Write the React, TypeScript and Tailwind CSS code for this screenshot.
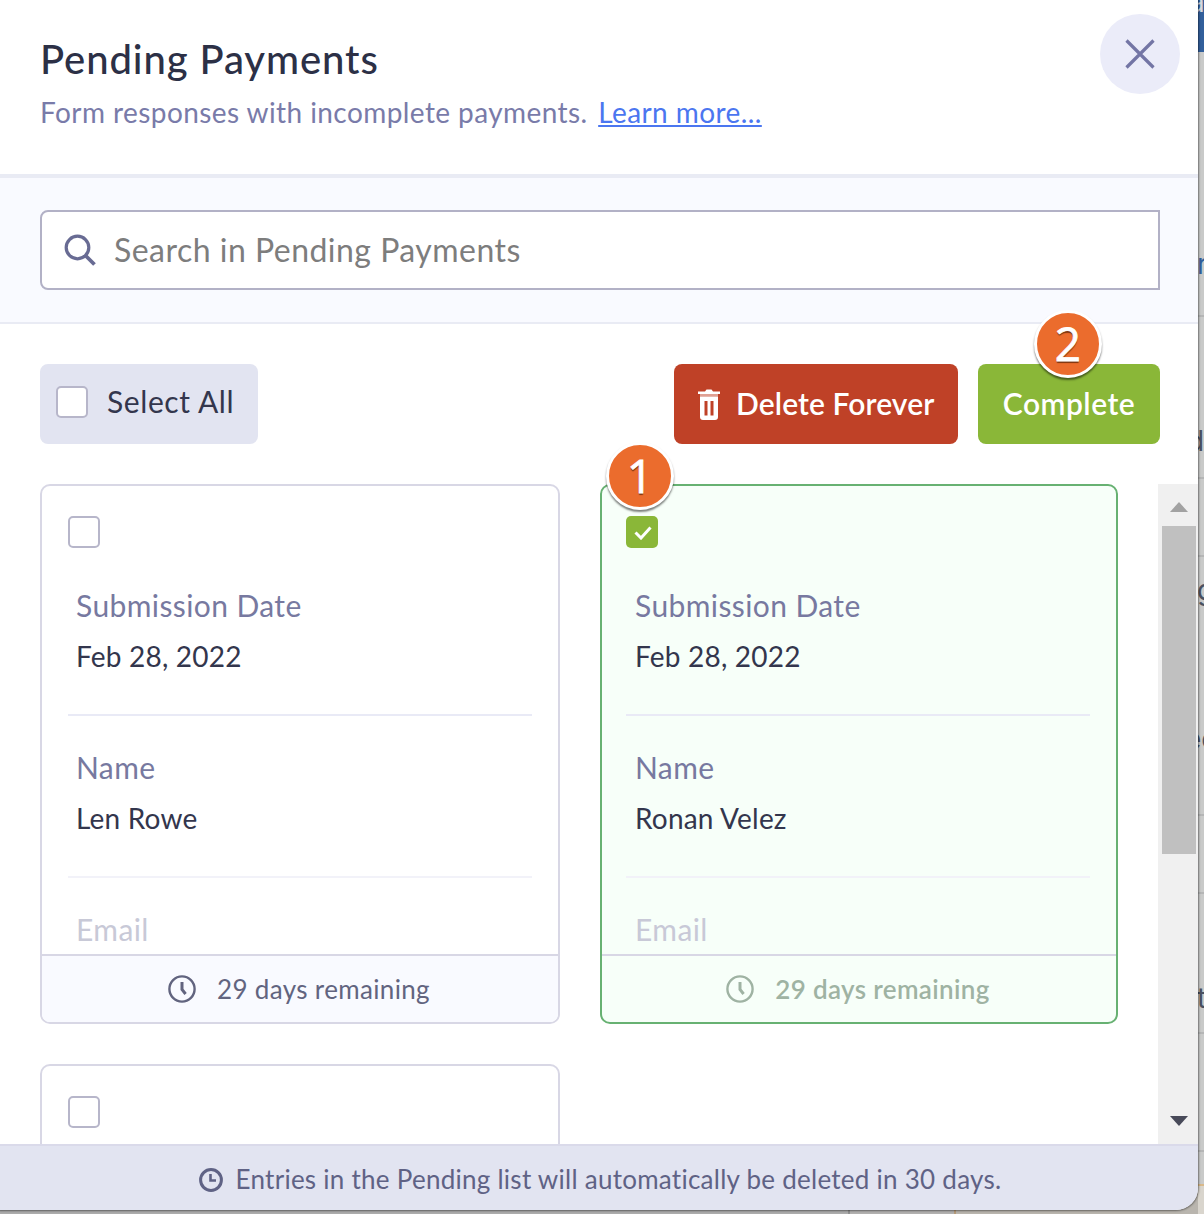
import clsx from "clsx";

const entries = [
  { name: "Len Rowe", checked: false },
  { name: "Ronan Velez", checked: true },
];

function Clock() {
  return (
    <svg className="mr-[21px] size-7" viewBox="0 0 28 28" fill="none" stroke="currentColor" strokeWidth="2.4">
      <circle cx="14" cy="14" r="12.6" />
      <path d="M14 7V14.5L17.6 19" strokeWidth="3" />
    </svg>
  );
}

function Checkbox({ checked }: { checked?: boolean }) {
  return (
    <div
      className={clsx(
        "flex size-8 shrink-0 items-center justify-center rounded-[5px]",
        checked ? "bg-[#8ab738]" : "border-2 border-[#b7b6ca] bg-white"
      )}
    >
      {checked && (
        <svg className="ml-0.5 mt-0.5 h-3.5 w-[18px]" viewBox="0 0 18 14" fill="none" stroke="white" strokeWidth="3">
          <path d="M1.5 6.5L7 12L16.5 1.5" />
        </svg>
      )}
    </div>
  );
}

function Field({ label, value, last }: { label: string; value: string; last?: boolean }) {
  return (
    <div className={clsx("h-[162px] shrink-0 border-b-2 px-2 pt-[33px]", last ? "border-[#f2f2f9]" : "border-[#e9eaf6]")}>
      <div className="text-[30px] leading-9 tracking-[0.4px] text-[#7779a0]">{label}</div>
      <div className="mt-[17px] text-[28px] leading-8 tracking-[0.2px] text-[#33364d]">{value}</div>
    </div>
  );
}

function Card({ name, checked }: { name: string; checked: boolean }) {
  return (
    <div
      className={clsx(
        "flex h-[540px] flex-col overflow-hidden rounded-[10px] border-2",
        checked ? "w-[518px] border-[#67b172] bg-[#f7fff9]" : "w-[520px] border-[#d8d7e5] bg-white"
      )}
    >
      <div className={clsx("flex h-[468px] shrink-0 flex-col pt-[30px]", checked ? "pl-6 pr-[26px]" : "px-[26px]")}>
        <Checkbox checked={checked} />
        <div className={clsx("flex flex-col pt-1.5", checked && "indent-px")}>
          <Field label="Submission Date" value="Feb 28, 2022" />
          <Field label="Name" value={name} last />
          <div className="px-2 pt-[33px] text-[30px] leading-9 tracking-[0.4px] text-[#c8c9d7]">Email</div>
        </div>
      </div>
      <div
        className={clsx(
          "flex flex-1 items-center justify-center border-t-2 border-[#d8d7e5] pr-0.5 text-[26px] tracking-[0.35px]",
          checked ? "font-semibold text-[#9fb3a3]" : "bg-[#f9faff] text-[#62647f]"
        )}
      >
        <Clock />
        <span className="pt-px">29 days remaining</span>
      </div>
    </div>
  );
}

function Badge({ children, className }: { children: string; className: string }) {
  return (
    <div
      className={clsx(
        "absolute flex size-[68px] items-center justify-center rounded-full border-[3px] border-white bg-[#eb6c2d] pb-0.5 font-['Open_Sans'] text-[46px] font-medium text-white shadow-[0_2px_2px_rgba(0,0,0,0.5)] [-webkit-text-stroke:0.8px_white] [text-shadow:0_2px_1px_#7a3510]",
        className
      )}
    >
      {children}
    </div>
  );
}

// sliver of the form table that shows to the right of the modal
function TableEdge() {
  return (
    <div className="absolute right-0 top-0 flex h-full w-[7px] flex-col overflow-hidden font-[Inter,sans-serif] text-[28px] leading-8 text-[#4a5161]">
      <div className="h-[52px] bg-[#325f9b] text-[#d5d9e0]">
        <div className="-mt-3.5 -ml-2">a</div>
      </div>
      <div className="flex h-[265px] items-end border-b-2 border-[#b5b6b6] pb-[35px] text-[#325f9b]">r</div>
      <div className="flex h-[162px] items-end border-b-2 border-[#b5b6b6] pb-5">
        <span className="-ml-2.5">d</span>
      </div>
      <div className="h-[78px] border-b-2 border-[#b5b6b6]" />
      <div className="flex h-[259px] flex-col justify-between border-b-2 border-[#b5b6b6] pb-[59px] pt-[17px]">
        <span>g</span>
        <span className="-ml-3">ed</span>
      </div>
      <div className="h-[78px] border-b-2 border-[#b5b6b6]" />
      <div className="flex h-[140px] items-end border-b-2 border-[#b5b6b6] pb-[18px]">t</div>
      <div className="h-[118px] border-b-2 border-[#b5b6b6]" />
      <div className="h-[34px] border-b-2 border-[#d9b98a]" />
      <div className="flex-1 bg-[#d9d5cd]" />
    </div>
  );
}

export default function App() {
  return (
    <div className="relative h-[1214px] w-[1204px] overflow-hidden bg-[#c9cac9] font-[Lato,sans-serif]">
      <TableEdge />
      <div className="absolute bottom-0 left-0 flex h-8 w-[1198px]">
        <div className="w-[850px] border-r-2 border-[#8f8f8f] bg-[#acacac]" />
        <div className="w-[106px] border-r-2 border-[#b59a78] bg-[#b2b1b0]" />
        <div className="flex-1 bg-[#b9b5ae]" />
      </div>

      <div className="relative flex h-[1210px] w-[1198px] flex-col rounded-br-[22px] bg-white shadow-[0_0_2px_1px_rgba(0,0,0,0.45)]">
        <header className="flex h-[178px] justify-between border-b-4 border-[#e9ebf4] pl-10 pr-[18px]">
          <div className="pt-[34px]">
            <h1 className="text-[40px] font-medium leading-[50px] tracking-[0.9px] text-[#2c3046]">Pending Payments</h1>
            <p className="mt-2.5 text-[28px] leading-9 tracking-[0.42px] text-[#797ba9]">
              Form responses with incomplete payments.{" "}
              <a className="ml-[3px] text-[#4b76f0] underline">Learn more...</a>
            </p>
          </div>
          <button className="mt-3.5 flex size-20 items-center justify-center rounded-full bg-[#ebecf9]">
            <svg className="size-[30px]" viewBox="0 0 30 30" stroke="#7375a5" strokeWidth="3.2">
              <path d="M1.5 1.5L28.5 28.5M28.5 1.5L1.5 28.5" />
            </svg>
          </button>
        </header>

        <div className="h-[146px] border-b-2 border-[#e9ebf4] bg-[#f9faff] pl-10 pr-[38px] pt-8">
          <div className="flex h-20 items-center rounded-l-lg border-2 border-[#b2b1c6] bg-white pl-[22px] text-[32px] tracking-[0.48px] text-[#7d7d7d]">
            <svg className="mr-[18px] size-8" viewBox="0 0 32 32" fill="none" stroke="#686b93" strokeWidth="3.2">
              <circle cx="13.5" cy="13.5" r="11.3" />
              <path d="M21.5 21.5L30.5 30.5" strokeWidth="3.8" />
            </svg>
            Search in Pending Payments
          </div>
        </div>

        <div className="flex h-40 shrink-0 items-center justify-between pl-10 pr-[38px]">
          <div className="flex h-20 w-[218px] items-center rounded-lg bg-[#e2e4f1] pb-1 pl-4 text-[30px] tracking-[0.6px] text-[#33364d]">
            <Checkbox />
            <span className="ml-[19px] pb-0.5">Select All</span>
          </div>
          <div className="flex gap-5 text-[30px] font-semibold text-white">
            <button className="flex h-20 w-[284px] items-center rounded-lg bg-[#bf4127] pl-6">
              <svg className="mr-4 h-[31px] w-[22px]" viewBox="0 0 22 31" fill="white">
                <path d="M0 2.5H7L8.5 .5H13.5L15 2.5H22V5H0z" />
                <path d="M2 5h18v2.5H2z" opacity=".5" />
                <path fillRule="evenodd" d="M2 7.5h18v20.5q0 3-3 3H5q-3 0-3-3zM6.5 12v14.5h3V12zM12.5 12v14.5h3V12z" />
              </svg>
              <span className="pb-0.5 tracking-[0.1px]">Delete Forever</span>
            </button>
            <button className="h-20 w-[182px] rounded-lg bg-[#8ab738] pb-0.5 tracking-[0.5px]">Complete</button>
          </div>
        </div>

        <div className="flex min-h-0 flex-1 justify-between overflow-hidden pl-10">
          <div className="flex w-[1078px] flex-wrap content-start gap-10">
            {entries.map((entry) => (
              <Card key={entry.name} {...entry} />
            ))}
            <div className="h-[540px] w-[520px] rounded-[10px] border-2 border-[#d8d7e5] px-[26px] pt-[30px]">
              <Checkbox />
            </div>
          </div>
          <div className="flex w-10 flex-col items-center justify-between bg-[#f0f0f0] py-[18px] pl-0.5">
            <div>
              <svg className="mx-auto h-2.5 w-[18px]" viewBox="0 0 18 10" fill="#a2a2a2">
                <path d="M9 0L18 10H0z" />
              </svg>
              <div className="mt-3.5 h-[328px] w-[34px] bg-[#c0c0c0]" />
            </div>
            <svg className="h-2.5 w-[18px]" viewBox="0 0 18 10" fill="#484a59">
              <path d="M0 0H18L9 10z" />
            </svg>
          </div>
        </div>

        <footer className="flex h-[66px] shrink-0 items-center justify-center rounded-br-[22px] border-t-2 border-[#dadaea] bg-[#e2e4f1] pl-0.5 pt-1 text-[26px] tracking-[0.26px] text-[#5f6285]">
          <svg className="mr-[13px] size-6" viewBox="0 0 24 24" fill="none" stroke="currentColor" strokeWidth="3">
            <circle cx="12" cy="12" r="10.4" />
            <path d="M11.5 6V12.5H17" strokeWidth="2.6" />
          </svg>
          <span className="pb-px">Entries in the Pending list will automatically be deleted in 30 days.</span>
        </footer>
      </div>

      <Badge className="left-[606px] top-[442px]">1</Badge>
      <Badge className="left-[1034px] top-[310px]">2</Badge>
    </div>
  );
}
